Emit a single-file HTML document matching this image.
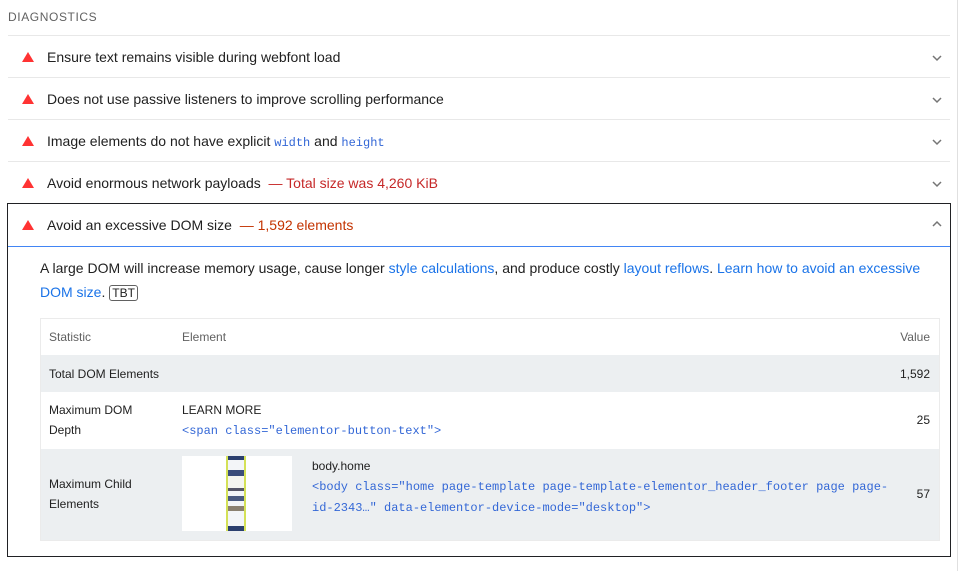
<!DOCTYPE html>
<html><head><meta charset="utf-8"><style>
*{margin:0;padding:0;box-sizing:border-box}
body{width:959px;height:571px;background:#fff;font-family:"Liberation Sans",Arial,sans-serif;color:#212121;position:relative;overflow:hidden}
.vline{position:absolute;left:957px;top:0;width:1px;height:571px;background:#e0e0e0}
.h{position:absolute;left:8px;top:10px;font-size:12px;letter-spacing:.6px;color:#616161}
.row{position:absolute;left:8px;width:942px;height:42px;border-top:1px solid #e8e8e8;font-size:14px}
.row .tri{position:absolute;left:14px;top:15px}
.row .t{position:absolute;left:39px;top:13px;white-space:nowrap}
.row .chev{position:absolute;right:8px;top:19px}
code{font-family:"Liberation Mono",monospace;font-size:12px;color:#3367d6}
.red{color:#c62828}
.or{color:#c33300}
.box{position:absolute;left:7px;top:203px;width:944px;height:354px;border:1px solid #202124}
.box .hd{position:absolute;left:0;top:0;width:942px;height:43px;border-bottom:1px solid #4285f4;font-size:14px}
.box .hd .tri{position:absolute;left:14px;top:15px}
.box .hd .t{position:absolute;left:39px;top:13px}
.box .hd .chev{position:absolute;right:8px;top:16px}
.p{position:absolute;left:32px;top:52px;width:890px;font-size:14px;line-height:24px}
a{color:#1a73e8;text-decoration:none}
.tbt{font-size:12px;border:1px solid #616161;border-radius:3px;padding:0 2px}
.tbl{position:absolute;left:32px;top:114px;width:900px;height:223px;border:1px solid #ebebeb;font-size:12px}
.tr{position:absolute;left:0;width:898px}
.tr .c1{position:absolute;left:8px}
.tr .c2{position:absolute;left:141px}
.tr .c3{position:absolute;right:9px}
.grey{background:#eceff1}
.hdr{color:#616161}
</style></head><body>
<div class="vline"></div>
<div class="h">DIAGNOSTICS</div>

<div class="row" style="top:35px"><svg class="tri" width="12" height="12" viewBox="0 0 12 12"><path d="M6 1L12 11H0Z" fill="#f33"/></svg><span class="t">Ensure text remains visible during webfont load</span><svg class="chev" width="10" height="7" viewBox="0 0 10 7"><path d="M1 1L5 5L9 1" fill="none" stroke="#757575" stroke-width="1.5"/></svg></div>
<div class="row" style="top:77px"><svg class="tri" width="12" height="12" viewBox="0 0 12 12"><path d="M6 1L12 11H0Z" fill="#f33"/></svg><span class="t">Does not use passive listeners to improve scrolling performance</span><svg class="chev" width="10" height="7" viewBox="0 0 10 7"><path d="M1 1L5 5L9 1" fill="none" stroke="#757575" stroke-width="1.5"/></svg></div>
<div class="row" style="top:119px"><svg class="tri" width="12" height="12" viewBox="0 0 12 12"><path d="M6 1L12 11H0Z" fill="#f33"/></svg><span class="t">Image elements do not have explicit <code>width</code> and <code>height</code></span><svg class="chev" width="10" height="7" viewBox="0 0 10 7"><path d="M1 1L5 5L9 1" fill="none" stroke="#757575" stroke-width="1.5"/></svg></div>
<div class="row" style="top:161px"><svg class="tri" width="12" height="12" viewBox="0 0 12 12"><path d="M6 1L12 11H0Z" fill="#f33"/></svg><span class="t">Avoid enormous network payloads <span class="red">&nbsp;— Total size was 4,260 KiB</span></span><svg class="chev" width="10" height="7" viewBox="0 0 10 7"><path d="M1 1L5 5L9 1" fill="none" stroke="#757575" stroke-width="1.5"/></svg></div>

<div class="box">
 <div class="hd"><svg class="tri" width="12" height="12" viewBox="0 0 12 12"><path d="M6 1L12 11H0Z" fill="#f33"/></svg><span class="t">Avoid an excessive DOM size <span class="or">&nbsp;— 1,592 elements</span></span><svg class="chev" width="10" height="7" viewBox="0 0 10 7"><path d="M1 6L5 2L9 6" fill="none" stroke="#757575" stroke-width="1.5"/></svg></div>
 <div class="p">A large DOM will increase memory usage, cause longer <a>style calculations</a>, and produce costly <a>layout reflows</a>. <a>Learn how to avoid an excessive DOM size</a>. <span class="tbt">TBT</span></div>
 <div class="tbl">
  <div class="tr hdr" style="top:0;height:36px"><span class="c1" style="top:11px">Statistic</span><span class="c2" style="top:11px">Element</span><span class="c3" style="top:11px">Value</span></div>
  <div class="tr grey" style="top:36px;height:37px"><span class="c1" style="top:12px">Total DOM Elements</span><span class="c3" style="top:12px">1,592</span></div>
  <div class="tr" style="top:73px;height:57px;line-height:20px"><span class="c1" style="top:8px">Maximum DOM<br>Depth</span><span class="c2" style="top:8px">LEARN MORE<br><code>&lt;span class="elementor-button-text"&gt;</code></span><span class="c3" style="top:18px">25</span></div>
  <div class="tr grey" style="top:130px;height:91px;line-height:20px">
   <span class="c1" style="top:25px">Maximum Child<br>Elements</span>
   <div style="position:absolute;left:141px;top:7px;width:110px;height:75px;background:#fff">
    <div style="position:absolute;left:44px;top:0;width:20px;height:75px;background:#d4e157;padding:0 2px">
     <div style="width:16px;height:75px;background:linear-gradient(#2b3f6e 0 4px,#f3f5f8 4px 14px,#3b4d7a 14px 20px,#f5f5f0 20px 32px,#556 32px 35px,#f3f5f8 35px 40px,#4a5a80 40px 45px,#f3f5f8 45px 50px,#8a8070 50px 55px,#f3f5f8 55px 70px,#2b3f6e 70px)"></div>
    </div>
   </div>
   <span style="position:absolute;left:271px;top:7px">body.home<br><code>&lt;body class="home page-template page-template-elementor_header_footer page page-<br>id-2343…" data-elementor-device-mode="desktop"&gt;</code></span>
   <span class="c3" style="top:35px">57</span>
  </div>
 </div>
</div>
</body></html>
